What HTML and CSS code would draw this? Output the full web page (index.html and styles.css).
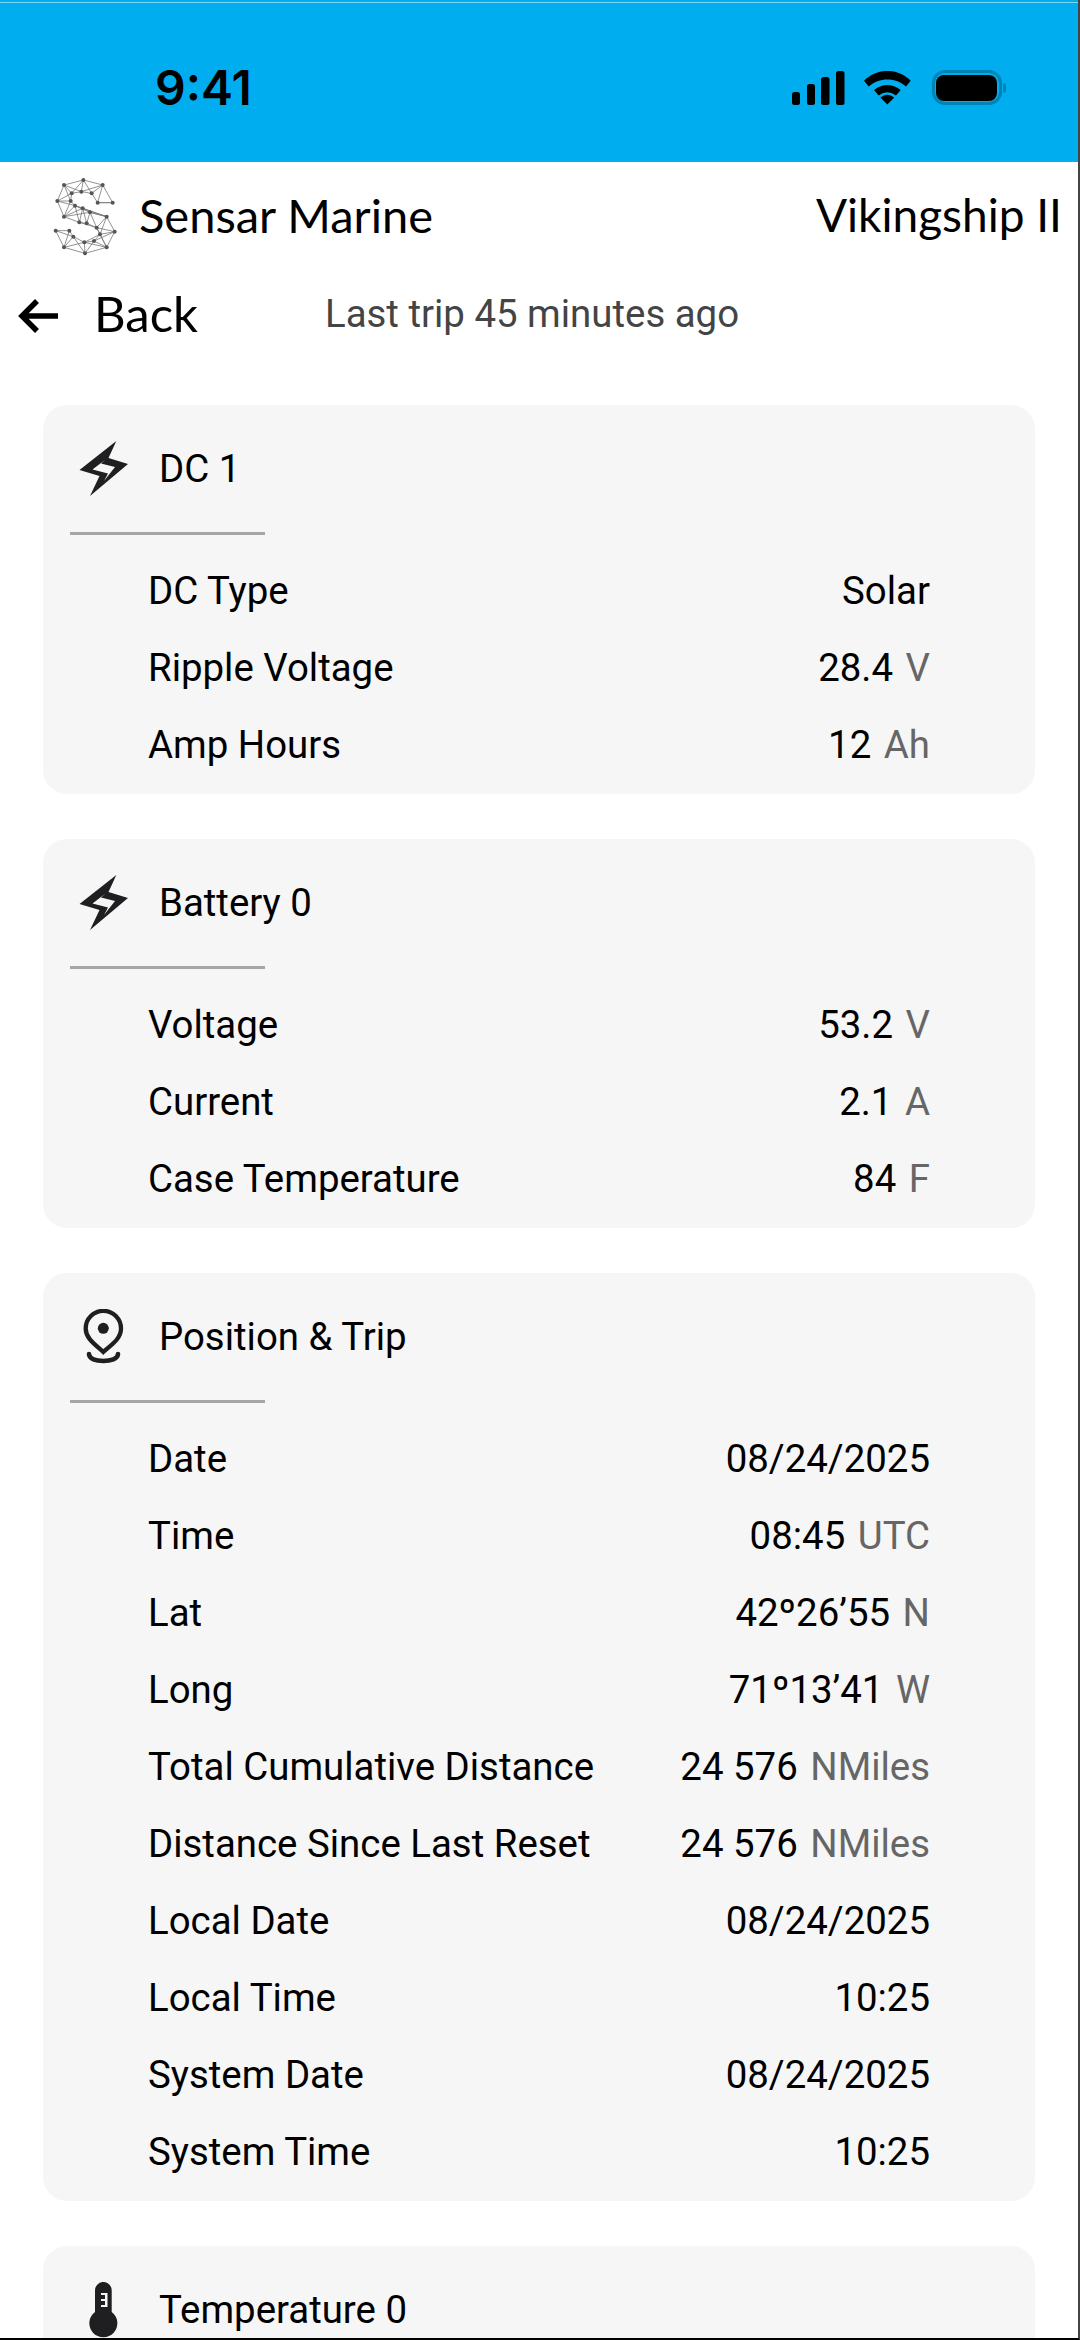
FILE: index.html
```html
<!DOCTYPE html>
<html lang="en">
<head>
    <meta charset="UTF-8">
    <meta name="viewport" content="width=device-width, initial-scale=1.0">
    <title>Sensar Marine</title>
    <link rel="stylesheet" href="styles.css">
</head>
<body>
<div class="screen">

    <div class="status-bar">
        <span class="clock">9:41</span>
        <div class="status-icons">
            <svg class="signal" viewBox="0 0 52.500 34" width="52.500" height="34">
                <rect x="0" y="21" width="8" height="13" rx="2.500"/>
                <rect x="15" y="13" width="8" height="21" rx="2.500"/>
                <rect x="29" y="6" width="8.500" height="28" rx="2.500"/>
                <rect x="44" y="0" width="8.500" height="34" rx="2.500"/>
            </svg>
            <svg class="wifi" viewBox="0 0 47 34" width="47" height="34">
                <path d="M0 9.700C13 -3.300 34 -3.300 46.700 9.700L42 15.500C32 6 15 6 4.700 15.500Z"/>
                <path d="M10 19Q23.300 9 36.700 19L32 24.500Q23.300 18 14.700 24.500Z"/>
                <path d="M23.300 33.500L16.300 26.500Q23.300 21 30.300 26.500Z"/>
            </svg>
            <div class="battery"><div class="battery-fill"></div></div>
            <div class="battery-nub"></div>
        </div>
    </div>

    <div class="brand-row">
        <svg class="logo" viewBox="0 0 270 300" width="90" height="100">
            <path fill="none" stroke="#777" stroke-width="2.400" d="M72 60L130 45L188 60L218 113L173 113L188 60L155 85L130 45L124 80L72 60L95 85L130 45M124 80L188 60M155 85L173 113L218 113M155 85L124 80L95 85M72 60L52 108L95 85L92 108L52 108L72 155L92 108L105 122L52 108M72 60L92 108M72 155L105 122L128 130L72 155L118 172L105 122L150 142L128 130L118 172L140 175L128 130L200 155L150 142L140 175L170 188L150 142L200 155L170 188L224 200L200 155L180 208L170 188M72 155L150 142M105 122L200 155M118 172L170 188M224 200L180 208L200 247L224 200L162 228L180 208M162 228L200 247L133 232L162 228L135 265L200 247M133 232L135 265L72 247L133 232L100 215L72 247L88 197L100 215L47 197L72 247M47 197L88 197M100 215L135 265M180 208L133 232M170 188L200 247"/>
            <g fill="#555">
                <circle cx="72" cy="60" r="6"/><circle cx="130" cy="45" r="6"/><circle cx="188" cy="60" r="6"/>
                <circle cx="218" cy="113" r="6"/><circle cx="173" cy="113" r="6"/><circle cx="155" cy="85" r="6"/>
                <circle cx="124" cy="80" r="6"/><circle cx="95" cy="85" r="6"/><circle cx="52" cy="108" r="6"/>
                <circle cx="92" cy="108" r="6"/><circle cx="72" cy="155" r="6"/><circle cx="105" cy="122" r="6"/>
                <circle cx="128" cy="130" r="6"/><circle cx="150" cy="142" r="6"/><circle cx="200" cy="155" r="6"/>
                <circle cx="118" cy="172" r="6"/><circle cx="140" cy="175" r="6"/><circle cx="170" cy="188" r="6"/>
                <circle cx="224" cy="200" r="6"/><circle cx="180" cy="208" r="6"/><circle cx="200" cy="247" r="6"/>
                <circle cx="162" cy="228" r="6"/><circle cx="133" cy="232" r="6"/><circle cx="135" cy="265" r="6"/>
                <circle cx="72" cy="247" r="6"/><circle cx="100" cy="215" r="6"/><circle cx="88" cy="197" r="6"/>
                <circle cx="47" cy="197" r="6"/>
            </g>
        </svg>
        <span class="brand-name">Sensar Marine</span>
        <span class="vessel-name">Vikingship II</span>
    </div>

    <div class="back-row">
        <svg class="back-arrow" viewBox="0 0 40 36" width="40" height="36">
            <path d="M40 18H5M19 3L4 18L19 33" fill="none" stroke="#000" stroke-width="5.500"/>
        </svg>
        <span class="back-label">Back</span>
        <span class="last-trip">Last trip 45 minutes ago</span>
    </div>

    <div class="cards">

        <section class="card">
            <div class="card-head">
                <svg class="card-icon" viewBox="0 0 56 60" width="56" height="60">
                    <path fill-rule="evenodd" fill="#1f1f22" d="M38.300 0L1.500 29L21.500 35L12 55L50 23L30.500 17ZM27.500 18.500L14.500 28.500L30 32.500L26 40L37 26L23 22.500Z"/>
                </svg>
                <h2 class="card-title">DC 1</h2>
            </div>
            <div class="row"><span>DC Type</span><span class="value">Solar</span></div>
            <div class="row"><span>Ripple Voltage</span><span class="value">28.4 <i>V</i></span></div>
            <div class="row"><span>Amp Hours</span><span class="value">12 <i>Ah</i></span></div>
        </section>

        <section class="card">
            <div class="card-head">
                <svg class="card-icon" viewBox="0 0 56 60" width="56" height="60">
                    <path fill-rule="evenodd" fill="#1f1f22" d="M38.300 0L1.500 29L21.500 35L12 55L50 23L30.500 17ZM27.500 18.500L14.500 28.500L30 32.500L26 40L37 26L23 22.500Z"/>
                </svg>
                <h2 class="card-title">Battery 0</h2>
            </div>
            <div class="row"><span>Voltage</span><span class="value">53.2 <i>V</i></span></div>
            <div class="row"><span>Current</span><span class="value">2.1 <i>A</i></span></div>
            <div class="row"><span>Case Temperature</span><span class="value">84 <i>F</i></span></div>
        </section>

        <section class="card">
            <div class="card-head">
                <svg class="card-icon" viewBox="0 0 56 60" width="56" height="60">
                    <path d="M25.300 43C18 36 7.700 30 7.700 19.500A17.600 17.600 0 0 1 43 19.500C43 30 33 36 25.300 43Z" fill="none" stroke="#1f1f22" stroke-width="4.300"/>
                    <circle cx="25.300" cy="19.300" r="5.500" fill="#1f1f22"/>
                    <path d="M11 45C11 50 18 52 25.300 52C32.500 52 40 50 40 45" fill="none" stroke="#1f1f22" stroke-width="4.600" stroke-linecap="round"/>
                </svg>
                <h2 class="card-title">Position &amp; Trip</h2>
            </div>
            <div class="row"><span>Date</span><span class="value">08/24/2025</span></div>
            <div class="row"><span>Time</span><span class="value">08:45 <i>UTC</i></span></div>
            <div class="row"><span>Lat</span><span class="value">42º26’55 <i>N</i></span></div>
            <div class="row"><span>Long</span><span class="value">71º13’41 <i>W</i></span></div>
            <div class="row"><span>Total Cumulative Distance</span><span class="value">24 576 <i>NMiles</i></span></div>
            <div class="row"><span>Distance Since Last Reset</span><span class="value">24 576 <i>NMiles</i></span></div>
            <div class="row"><span>Local Date</span><span class="value">08/24/2025</span></div>
            <div class="row"><span>Local Time</span><span class="value">10:25</span></div>
            <div class="row"><span>System Date</span><span class="value">08/24/2025</span></div>
            <div class="row"><span>System Time</span><span class="value">10:25</span></div>
        </section>

        <section class="card">
            <div class="card-head">
                <svg class="card-icon" viewBox="0 0 56 60" width="56" height="60">
                    <path d="M17 30V8.300A8.350 8.350 0 0 1 33.700 8.300V30A14 14 0 1 1 17 30Z" fill="#1f1f22"/>
                    <path d="M23 11H29.500V25H23V23H27V19H23V17H27V13H23Z" fill="#f6f6f6"/>
                </svg>
                <h2 class="card-title">Temperature 0</h2>
            </div>
        </section>

    </div>
</div>
</body>
</html>
```

FILE: styles.css
```css
* {
    box-sizing: border-box;
}
body {
    margin: 0;
    background: white;
    font-family: Roboto, sans-serif;
    color: black;
}
.screen {
    width: 1080px;
    height: 2340px;
    overflow: hidden;
    border-right: 2px solid #444;
    border-bottom: 2px solid black;
}

/* status bar */
.status-bar {
    height: 162px;
    background: linear-gradient(#00aeef 2px, #7ed6f7 2px, #7ed6f7 3px, #00aeef 3px);
    display: flex;
    align-items: center;
    justify-content: space-between;
    padding: 13px 72px 0 155px;
}
.clock {
    font-family: Inter, sans-serif;
    font-size: 48px;
    font-weight: 600;
}
.status-icons {
    display: flex;
    align-items: center;
}
.signal {
    margin-right: 19px;
}
.wifi {
    margin-right: 21px;
}
.battery {
    width: 70px;
    height: 35px;
    border: 3.5px solid #0083b5;
    border-radius: 13px;
    padding: 1.5px;
}
.battery-fill {
    height: 100%;
    background: black;
    border-radius: 8px;
}
.battery-nub {
    width: 3.5px;
    height: 10px;
    margin-left: 1px;
    background: #0083b5;
    border-radius: 0 6px 6px 0;
}

/* brand row */
.brand-row {
    height: 106px;
    display: flex;
    align-items: center;
    padding: 0 16px 0 40px;
}
.logo {
    margin-right: 9px;
    flex-shrink: 0;
}
.brand-name {
    font-family: Lato, sans-serif;
    font-size: 47px;
    padding-bottom: 1px;
}
.vessel-name {
    font-family: Lato, sans-serif;
    font-size: 46px;
    padding-bottom: 1px;
    margin-left: auto;
}

/* back row */
.back-row {
    height: 92px;
    display: flex;
    align-items: center;
    padding: 0 0 2px 18px;
}
.back-arrow {
    margin: 5px 36px 0 0;
}
.back-label {
    font-family: Lato, sans-serif;
    font-size: 49px;
    width: 231px;
}
.last-trip {
    font-size: 38.4px;
    color: #444;
}

/* cards */
.cards {
    padding: 45px 43px 0 43px;
    display: flex;
    flex-direction: column;
    gap: 45px;
}
.card {
    background: #f6f6f6;
    border-radius: 24px;
    padding-bottom: 11px;
}
.card-head {
    height: 147px;
    margin-left: 27px;
    padding: 36px 0 0 8px;
    display: flex;
    align-items: flex-start;
    position: relative;
}
.card-head::after {
    content: "";
    position: absolute;
    left: 0;
    top: 127px;
    width: 195px;
    height: 3px;
    background: #a6a6a6;
}
.card-icon {
    margin-right: 25px;
    flex-shrink: 0;
}
.card-title {
    margin: 0;
    font-size: 38.4px;
    font-weight: 400;
    line-height: 56px;
}
.row {
    height: 77px;
    display: flex;
    align-items: center;
    justify-content: space-between;
    padding: 0 105px 1px 105px;
    font-size: 38.4px;
}
.value i {
    font-style: normal;
    color: #666;
    margin-left: 3px;
}
```
